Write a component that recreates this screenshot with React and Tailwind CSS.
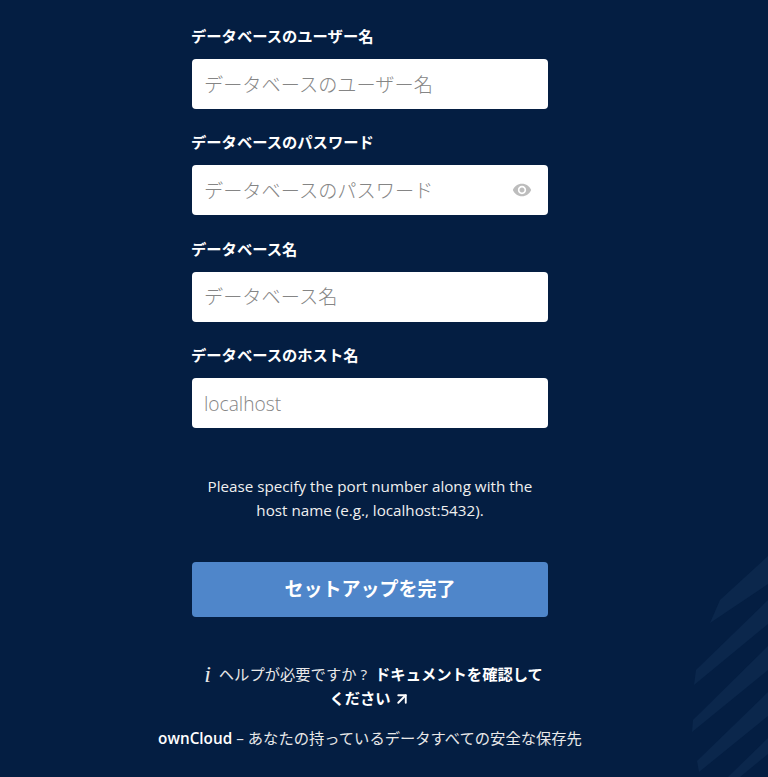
import React from 'react'
import { MdVisibility } from 'react-icons/md'
import { ArrowUpRight } from 'lucide-react'

const fontStack = "font-['Open_Sans','Noto_Sans_CJK_JP',sans-serif]"

const Field = ({ label, placeholder, eye }) => {
  return (
    <div className="mb-[22.4px]">
      <label className="block h-[22px] mb-3 -ml-px text-[15.3px] leading-[22px] font-bold text-white">{label}</label>
      <div className="relative">
        <input
          type="text"
          placeholder={placeholder}
          className="block w-full h-[50px] px-3 rounded-[4px] bg-white text-[19.2px] font-light text-gray-700 placeholder:text-[#858585] outline-none"
        />
        {eye && <MdVisibility className="absolute right-[16px] top-[15px] text-[20px] text-[#bdbdbd]" />}
      </div>
    </div>
  )
}

const App = () => {
  return (
    <div className={`relative h-[777px] overflow-hidden bg-[#041e42] ${fontStack}`}>
      <svg className="absolute right-0 bottom-0" width="100" height="237" viewBox="0 0 100 237" fill="#0b274c">
        <path d="M100 16V44L42 83L52 60Z" />
        <path d="M100 60V84L26 145L28 130Z" />
        <path d="M100 106V130L24 192L25 180Z" />
        <path d="M100 152V176L31 232L29 221Z" />
        <path d="M100 198V214L72 237H60Z" />
      </svg>

      <main className="relative w-[356px] pt-[25px] ml-[192px] flex flex-col">
        <Field label="データベースのユーザー名" placeholder="データベースのユーザー名" />
        <Field label="データベースのパスワード" placeholder="データベースのパスワード" eye />
        <Field label="データベース名" placeholder="データベース名" />
        <Field label="データベースのホスト名" placeholder="localhost" />

        <p className="mt-[23px] px-2 text-center text-[15.2px] leading-6 text-[#f0f0f0]">
          Please specify the port number along with the host name (e.g., localhost:5432).
        </p>

        <button className="block w-full h-[55px] mt-[40px] rounded-[4px] bg-[#4f86ca] text-[19px] font-bold text-white">
          セットアップを完了
        </button>

        <p className="mt-[45px] text-center text-[15.3px] leading-6 text-[#e8e8e8]">
          <span className="ml-[7px] mr-2 align-[-2px] text-[24px] leading-none italic font-['Liberation_Serif',serif]">i</span>
          ヘルプが必要ですか ?{' '}
          <a href="#" className="ml-1 font-bold text-white">
            ドキュメントを確認してください
            <ArrowUpRight className="inline-block ml-0.5 w-[18px] h-[18px]" strokeWidth={2.5} />
          </a>
        </p>

        <p className="mt-[17px] -mx-10 text-center text-[15.3px] leading-[22px] text-[#e8e8e8]">
          <b className="font-semibold text-white">ownCloud</b> – あなたの持っているデータすべての安全な保存先
        </p>
      </main>
    </div>
  )
}

export default App
